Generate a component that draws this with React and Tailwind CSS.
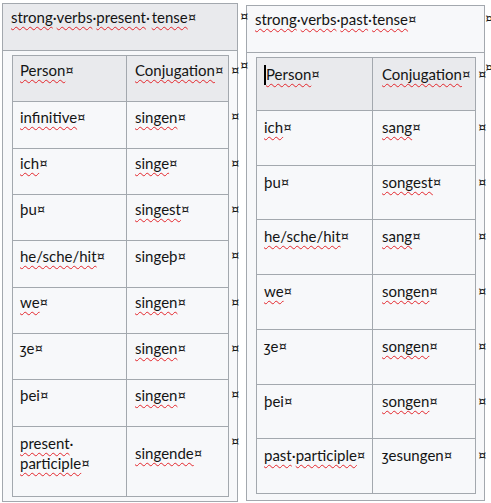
import React from "react";

const SQ = "underline decoration-wavy decoration-[#e3262b] decoration-1 underline-offset-[3px]";
const BORDER = "border-[#a3a8ae]";

function Txt({ text }) {
  const parts = text.split(/(·|\s+)/);
  return (
    <>
      {parts.map((p, i) => {
        if (p === "" ) return null;
        if (p === "·" || /^\s+$/.test(p)) return <span key={i}>{p}</span>;
        const flag = !/[þʒ]/.test(p);
        return (
          <span key={i} className={flag ? SQ : ""}>
            {p}
          </span>
        );
      })}
      <span>¤</span>
    </>
  );
}

const leftRows = [
  { a: "infinitive", b: "singen", h: "h-[47px]" },
  { a: "ich", b: "singe", h: "h-[46px]" },
  { a: "þu", b: "singest", h: "h-[46px]" },
  { a: "he/sche/hit", b: "singeþ", h: "h-[47px]" },
  { a: "we", b: "singen", h: "h-[46px]" },
  { a: "ʒe", b: "singen", h: "h-[46px]" },
  { a: "þei", b: "singen", h: "h-[47px]" },
];

const rightRows = [
  { a: "ich", b: "sang", h: "h-[55px]" },
  { a: "þu", b: "songest", h: "h-[54px]" },
  { a: "he/sche/hit", b: "sang", h: "h-[55px]" },
  { a: "we", b: "songen", h: "h-[55px]" },
  { a: "ʒe", b: "songen", h: "h-[55px]" },
  { a: "þei", b: "songen", h: "h-[54px]" },
  { a: "past·participle", b: "ʒesungen", h: "h-[55px]" },
];

function LeftRow({ h, bg, a, b }) {
  return (
    <div className={`relative flex ${h}`}>
      <div className={`w-[114px] shrink-0 border-r border-b ${BORDER} ${bg} pl-[7px] flex items-center pb-[17px] whitespace-nowrap`}>
        <div>{a}</div>
      </div>
      <div className={`w-[102px] shrink-0 border-r border-b ${BORDER} ${bg} pl-[8px] flex items-center pb-[17px] whitespace-nowrap`}>
        <div>{b}</div>
      </div>
      <span className="absolute left-[calc(100%+2px)] top-[4px]">¤</span>
    </div>
  );
}

function RightRow({ h, bg, a, b, caret }) {
  return (
    <div className={`relative flex ${h}`}>
      <div className={`relative w-[116px] shrink-0 border-r border-b ${BORDER} ${bg} pl-[7px] pt-[6px] whitespace-nowrap`}>
        {caret && <span className="absolute left-[7px] top-[7px] w-[2px] h-[20px] bg-black" />}
        <div className={caret ? "pl-[2px]" : ""}>{a}</div>
      </div>
      <div className={`w-[103px] shrink-0 border-r border-b ${BORDER} ${bg} pl-[9px] pt-[6px] whitespace-nowrap`}>
        <div>{b}</div>
      </div>
      <span className="absolute left-[calc(100%+2px)] top-[6px]">¤</span>
    </div>
  );
}

export default function App() {
  return (
    <div className="w-[491px] h-[503px] overflow-hidden bg-white flex items-start pl-[2px] pt-[3px] gap-[8px] font-['Lato','Noto_Sans',sans-serif] text-[15px] leading-[20px] text-[#141414]">
      {/* Left outer table */}
      <div className={`w-[236px] border ${BORDER} bg-[#f7f8fa]`}>
        <div className={`relative h-[47px] bg-[#e9eaed] border-b ${BORDER} pl-[8px] pt-[3px] whitespace-nowrap`}>
          <Txt text={"strong·verbs·present·\u2009tense"} />
          <span className="absolute left-[calc(100%+3px)] top-[2px]">¤</span>
        </div>
        <div className="relative pl-[9px] pr-[8px] pt-[4px] pb-[4px]">
          <span className="absolute left-[calc(100%+3px)] top-[4px]">¤</span>
          <div className={`w-[217px] border-l border-t ${BORDER}`}>
            <LeftRow h="h-[46px]" bg="bg-[#e9eaed]" a={<Txt text="Person" />} b={<Txt text="Conjugation" />} />
            {leftRows.map((r, i) => (
              <LeftRow key={i} h={r.h} bg="bg-[#f7f8fa]" a={<Txt text={r.a} />} b={<Txt text={r.b} />} />
            ))}
            <LeftRow
              h="h-[70px]"
              bg="bg-[#f7f8fa]"
              a={
                <>
                  <div><span className={SQ}>present</span>·</div>
                  <div><span className={SQ}>participle</span>¤</div>
                </>
              }
              b={<Txt text="singende" />}
            />
          </div>
        </div>
      </div>

      {/* Right outer table */}
      <div className={`mt-[2px] w-[239px] border ${BORDER} bg-[#f7f8fa]`}>
        <div className={`relative h-[47px] border-b ${BORDER} pl-[8px] pt-[3px] whitespace-nowrap`}>
          <Txt text="strong·verbs·past·tense" />
          <span className="absolute left-[calc(100%+1px)] top-[2px]">¤</span>
        </div>
        <div className="relative pl-[9px] pr-[8px] pt-[4px] pb-[6px]">
          <span className="absolute left-[calc(100%+1px)] top-[4px]">¤</span>
          <div className={`w-[220px] border-l border-t ${BORDER}`}>
            <RightRow h="h-[53px]" bg="bg-[#e9eaed]" a={<Txt text="Person" />} b={<Txt text="Conjugation" />} caret />
            {rightRows.map((r, i) => (
              <RightRow key={i} h={r.h} bg="bg-[#f7f8fa]" a={<Txt text={r.a} />} b={<Txt text={r.b} />} />
            ))}
          </div>
        </div>
      </div>
    </div>
  );
}
